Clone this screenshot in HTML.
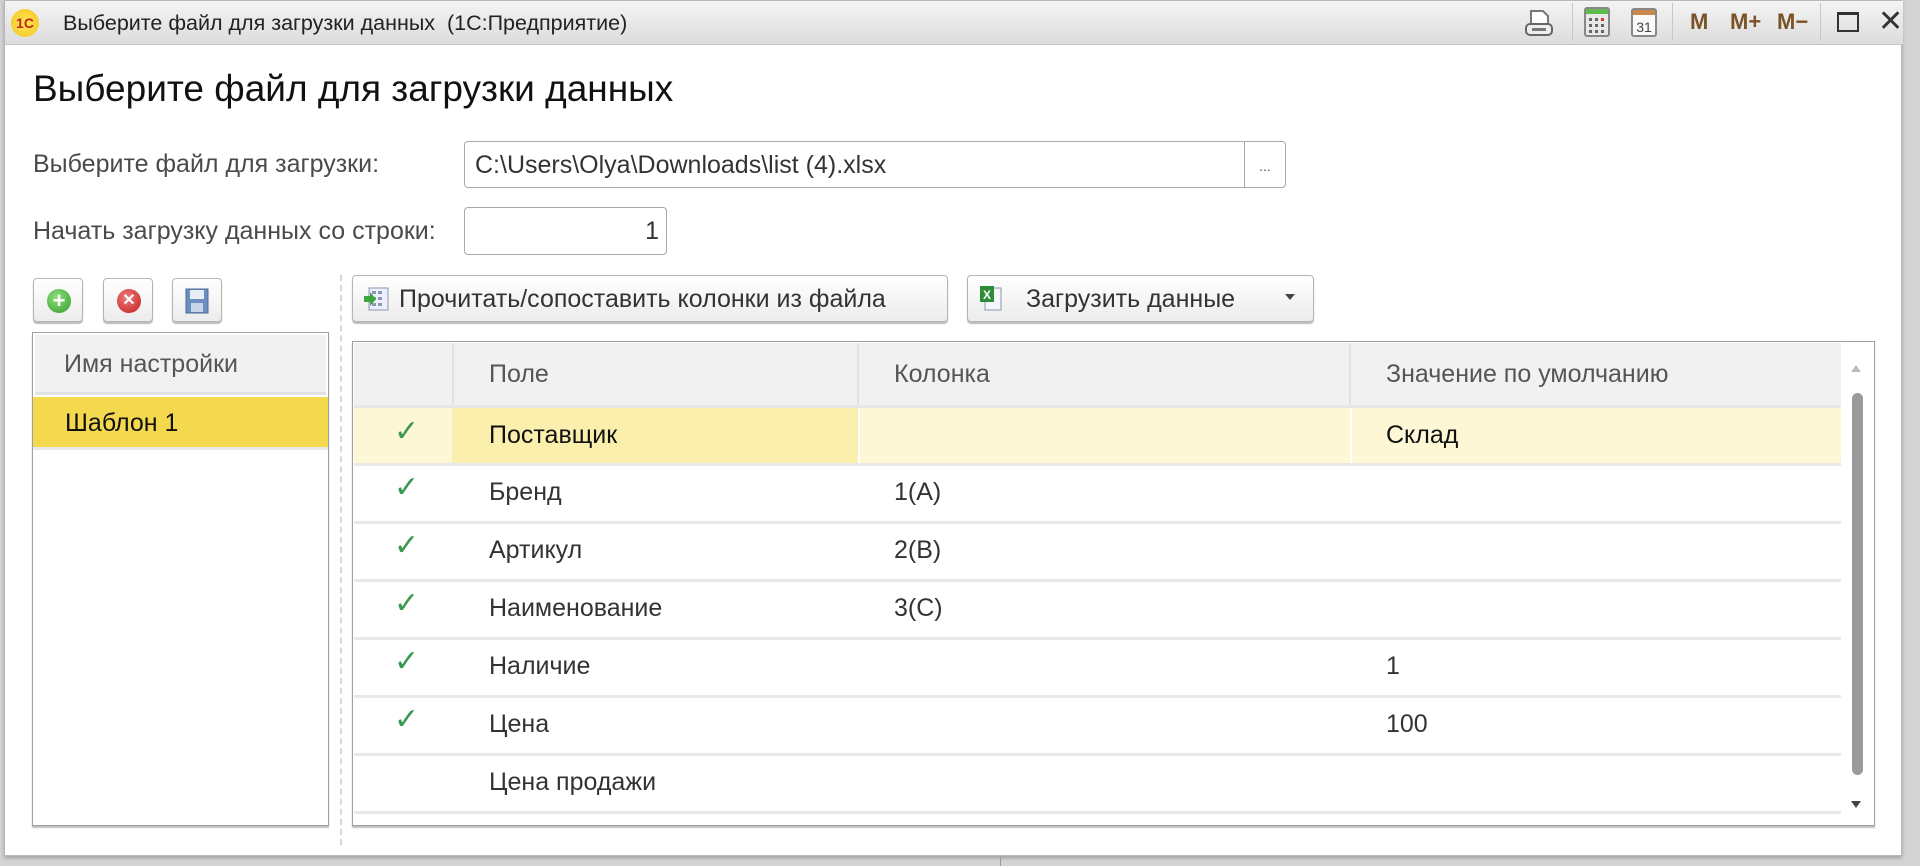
<!DOCTYPE html>
<html><head><meta charset="utf-8"><style>
*{box-sizing:border-box;margin:0;padding:0}
body{width:1920px;height:866px;background:#d4d4d4;position:relative;overflow:hidden;font-family:"Liberation Sans",Arial,sans-serif;}
.a{position:absolute}
.win{left:4px;top:0;width:1898px;height:856px;background:#fff;border:1px solid #b8b8b8;box-shadow:0 2px 4px rgba(0,0,0,.25)}
.tb{left:0;top:0;width:1898px;height:44px;background:linear-gradient(#f4f4f4,#dcdcdc);border-bottom:1px solid #c6c6c6}
.lbl{color:#4a4a4a;font-size:25px}
.inp{border:1px solid #a9a9a9;border-radius:4px;background:#fff;font-size:25px;color:#333}
.btn{border:1px solid #b5b5b5;border-radius:4px;background:linear-gradient(#fff,#ececec);box-shadow:0 2px 1px #bcbcbc}
.cell{position:absolute;font-size:25px;color:#333}
.row{position:absolute;left:1px;width:1487px;height:58px;border-top:3px solid #e8e8e8}
.chk{position:absolute;left:40px;color:#3a9a4f;font-size:30px}
</style></head><body>
<div class="a win">
 <div class="a tb">
  <div class="a" style="left:6px;top:8px;width:28px;height:28px;border-radius:50%;background:radial-gradient(#ffe75a,#f2c41c);color:#c0261a;font-weight:bold;font-size:14px;line-height:28px;text-align:center">1C</div>
  <div class="a" style="left:58px;top:10px;font-size:21.5px;color:#222">Выберите файл для загрузки данных &nbsp;(1С:Предприятие)</div>
  <svg class="a" style="left:1518px;top:6px" width="32" height="32" viewBox="0 0 32 32"><path d="M8 4h12l5 5v8H8z" fill="#fff" stroke="#777" stroke-width="2"/><rect x="3" y="17" width="26" height="11" rx="4" fill="#eee" stroke="#666" stroke-width="2"/><rect x="9" y="21" width="14" height="3" fill="#777"/></svg>
  <div class="a" style="left:1567px;top:2px;width:1px;height:38px;background:#c8c8c8"></div>
  <svg class="a" style="left:1578px;top:5px" width="28" height="32"><rect x="2" y="2" width="24" height="28" rx="2" fill="#e8e8e8" stroke="#888" stroke-width="2"/><rect x="3" y="3" width="22" height="5" fill="#5fbd4e"/><g fill="#666"><rect x="6" y="12" width="3" height="3"/><rect x="12" y="12" width="3" height="3"/><rect x="18" y="12" width="3" height="3" fill="#d33"/><rect x="6" y="18" width="3" height="3"/><rect x="12" y="18" width="3" height="3"/><rect x="18" y="18" width="3" height="3"/><rect x="6" y="24" width="3" height="3"/><rect x="12" y="24" width="3" height="3"/><rect x="18" y="24" width="3" height="3"/></g></svg>
  <svg class="a" style="left:1625px;top:4px" width="28" height="33"><rect x="2" y="4" width="24" height="27" rx="2" fill="#fafafa" stroke="#888" stroke-width="2"/><rect x="3" y="5" width="22" height="5" fill="#c88a4a"/><text x="14" y="27" font-size="14" text-anchor="middle" fill="#444" font-family="Liberation Sans">31</text></svg>
  <div class="a" style="left:1667px;top:2px;width:1px;height:38px;background:#c8c8c8"></div>
  <div class="a" style="left:1685px;top:8px;font-size:22px;font-weight:bold;color:#7a5228">M</div>
  <div class="a" style="left:1725px;top:8px;font-size:22px;font-weight:bold;color:#7a5228">M+</div>
  <div class="a" style="left:1772px;top:8px;font-size:22px;font-weight:bold;color:#7a5228">M−</div>
  <div class="a" style="left:1815px;top:2px;width:1px;height:38px;background:#c8c8c8"></div>
  <div class="a" style="left:1832px;top:11px;width:22px;height:20px;border:2px solid #333;border-top-width:3px"></div>
  <div class="a" style="left:1873px;top:3px;font-size:30px;color:#333">✕</div>
 </div>
 <div class="a" style="left:28px;top:67px;font-size:37px;color:#111">Выберите файл для загрузки данных</div>
 <div class="a lbl" style="left:28px;top:149px">Выберите файл для загрузки:</div>
 <div class="a inp" style="left:459px;top:140px;width:822px;height:47px;padding:9px 0 0 10px">C:\Users\Olya\Downloads\list (4).xlsx
  <div class="a" style="right:0;top:0;width:41px;height:45px;border-left:1px solid #a9a9a9;font-size:14px;color:#555;text-align:center;line-height:48px">...</div></div>
 <div class="a lbl" style="left:28px;top:216px">Начать загрузку данных со строки:</div>
 <div class="a inp" style="left:459px;top:206px;width:203px;height:48px;text-align:right;padding:9px 7px 0 0">1</div>

 <div class="a btn" style="left:28px;top:277px;width:50px;height:44px"><div class="a" style="left:13px;top:10px;width:24px;height:24px;border-radius:50%;background:radial-gradient(circle at 40% 35%,#8fe07a,#2f9a2c);color:#fff;font-weight:bold;font-size:22px;line-height:23px;text-align:center">+</div></div>
 <div class="a btn" style="left:98px;top:277px;width:50px;height:44px"><div class="a" style="left:13px;top:10px;width:24px;height:24px;border-radius:50%;background:radial-gradient(circle at 40% 35%,#f07a7a,#c01f1f);color:#fff;font-weight:bold;font-size:16px;line-height:24px;text-align:center">✕</div></div>
 <div class="a btn" style="left:167px;top:277px;width:50px;height:44px"><svg class="a" style="left:12px;top:9px" width="24" height="26"><rect x="1" y="1" width="22" height="24" fill="#6d8fc0" stroke="#4a6a9a"/><rect x="5" y="2" width="14" height="9" fill="#e8eef8"/><rect x="6" y="15" width="12" height="9" fill="#c8d4e8"/></svg></div>

 <div class="a" style="left:27px;top:331px;width:297px;height:494px;border:1px solid #a0a0a0;box-shadow:0 2px 1px #bdbdbd">
  <div class="a" style="left:2px;top:2px;width:291px;height:60px;background:#f1f1f1;border-bottom:3px solid #e2e2e2"><div class="a lbl" style="left:29px;top:15px;color:#555">Имя настройки</div></div>
  <div class="a" style="left:0;top:64px;width:295px;height:53px;background:#f4d84e;border-bottom:3px solid #e8e8e8"><div class="a" style="left:32px;top:12px;font-size:25px;color:#111">Шаблон 1</div></div>
 </div>
 <div class="a" style="left:335px;top:274px;width:0;height:570px;border-left:2px dashed #d8d8d8"></div>

 <div class="a btn" style="left:347px;top:274px;width:596px;height:47px">
  <svg class="a" style="left:10px;top:11px" width="26" height="24"><rect x="6" y="1" width="19" height="22" fill="#eef" stroke="#8898b0"/><g fill="#8898b0"><rect x="9" y="4" width="4" height="3"/><rect x="15" y="4" width="4" height="3"/><rect x="9" y="10" width="4" height="3"/><rect x="15" y="10" width="4" height="3"/><rect x="9" y="16" width="4" height="3"/><rect x="15" y="16" width="4" height="3"/></g><path d="M1 9h6v-4l6 7-6 7v-4H1z" fill="#3ea63a"/></svg>
  <div class="a" style="left:46px;top:9px;font-size:25px;color:#333">Прочитать/сопоставить колонки из файла</div></div>
 <div class="a btn" style="left:962px;top:274px;width:347px;height:47px">
  <svg class="a" style="left:11px;top:9px" width="24" height="28"><rect x="6" y="3" width="16" height="22" fill="#f4f6fa" stroke="#8898b0"/><rect x="1" y="1" width="14" height="16" fill="#2e8b3a"/><text x="8" y="14" font-size="12" font-weight="bold" fill="#fff" text-anchor="middle" font-family="Liberation Sans">X</text></svg>
  <div class="a" style="left:58px;top:9px;font-size:25px;color:#333">Загрузить данные</div>
  <div class="a" style="left:317px;top:18px;border:5px solid transparent;border-top:6px solid #444"></div></div>

 <div class="a" style="left:347px;top:340px;width:1523px;height:485px;border:1px solid #a0a0a0;box-shadow:0 2px 1px #bdbdbd;overflow:hidden">
  <div class="a" style="left:1px;top:1px;width:1487px;height:62px;background:#f1f1f1"></div>
  <div class="a" style="left:99px;top:1px;width:2px;height:62px;background:#e2e2e2"></div>
  <div class="a" style="left:504px;top:1px;width:2px;height:62px;background:#e2e2e2"></div>
  <div class="a" style="left:996px;top:1px;width:2px;height:62px;background:#e2e2e2"></div>
  <div class="cell lbl" style="left:136px;top:18px;color:#555">Поле</div>
  <div class="cell lbl" style="left:541px;top:18px;color:#555">Колонка</div>
  <div class="cell lbl" style="left:1033px;top:18px;color:#555">Значение по умолчанию</div>

  <div class="row" style="top:63px;background:#fdf7d6"><div class="a" style="left:98px;top:0;width:406px;height:55px;background:#faefac"></div><div class="a" style="left:504px;top:0;width:2px;height:55px;background:#fff"></div><div class="a" style="left:996px;top:0;width:2px;height:55px;background:#fff"></div>
   <div class="chk" style="top:6px">✓</div><div class="cell" style="left:135px;top:13px;color:#111">Поставщик</div><div class="cell" style="left:1032px;top:13px;color:#111">Склад</div></div>
  <div class="row" style="top:121px"><div class="chk" style="top:4px">✓</div><div class="cell" style="left:135px;top:12px">Бренд</div><div class="cell" style="left:540px;top:12px">1(A)</div></div>
  <div class="row" style="top:179px"><div class="chk" style="top:4px">✓</div><div class="cell" style="left:135px;top:12px">Артикул</div><div class="cell" style="left:540px;top:12px">2(B)</div></div>
  <div class="row" style="top:237px"><div class="chk" style="top:4px">✓</div><div class="cell" style="left:135px;top:12px">Наименование</div><div class="cell" style="left:540px;top:12px">3(C)</div></div>
  <div class="row" style="top:295px"><div class="chk" style="top:4px">✓</div><div class="cell" style="left:135px;top:12px">Наличие</div><div class="cell" style="left:1032px;top:12px">1</div></div>
  <div class="row" style="top:353px"><div class="chk" style="top:4px">✓</div><div class="cell" style="left:135px;top:12px">Цена</div><div class="cell" style="left:1032px;top:12px">100</div></div>
  <div class="row" style="top:411px"><div class="cell" style="left:135px;top:12px">Цена продажи</div></div>
  <div class="row" style="top:469px"></div>
  <div class="a" style="left:1498px;top:18px;border:5px solid transparent;border-bottom:7px solid #bbb"></div>
  <div class="a" style="left:1499px;top:51px;width:11px;height:382px;border-radius:6px;background:#9a9a9a"></div>
  <div class="a" style="left:1498px;top:459px;border:5px solid transparent;border-top:7px solid #444"></div>
 </div>
</div>
<div class="a" style="left:1000px;top:857px;width:1px;height:9px;background:#999"></div>
</body></html>
